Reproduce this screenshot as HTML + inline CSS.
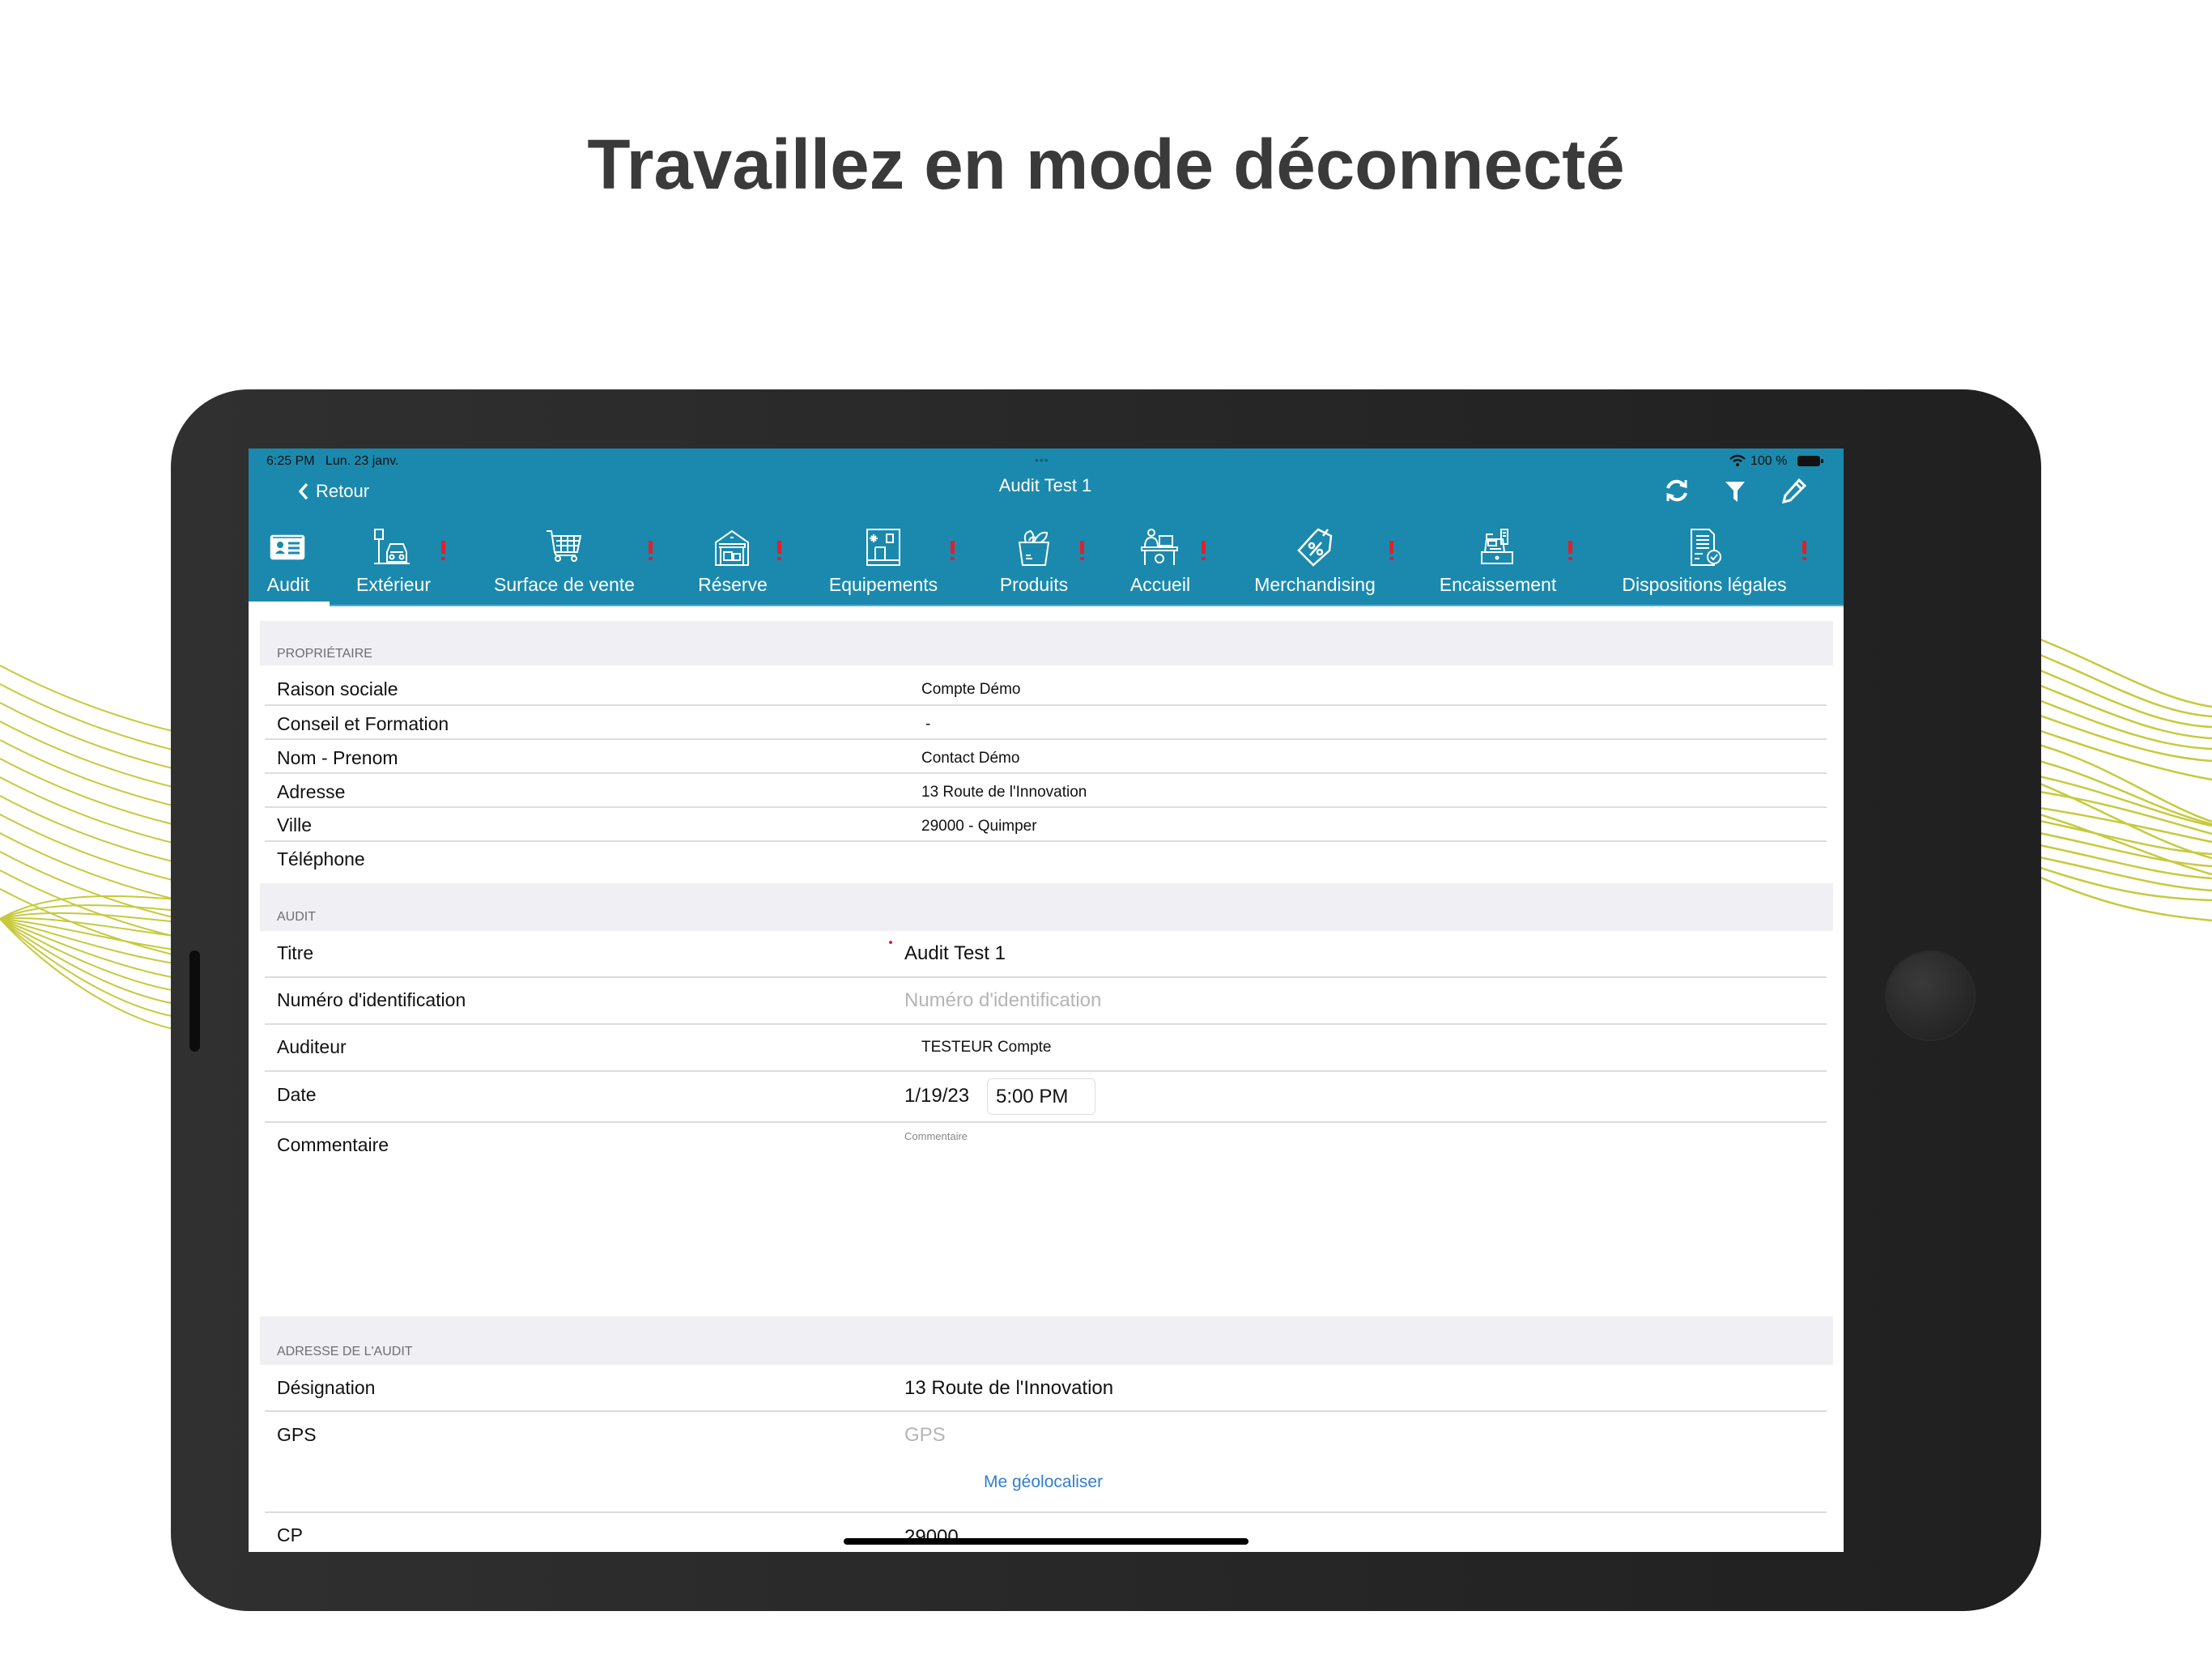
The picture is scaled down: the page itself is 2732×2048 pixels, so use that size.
<!DOCTYPE html>
<html><head><meta charset="utf-8"><style>
*{margin:0;padding:0;box-sizing:border-box}
body{width:2732px;height:2048px;background:#fff;position:relative;overflow:hidden;font-family:"Liberation Sans",sans-serif}
.t{position:absolute;white-space:nowrap;line-height:1}
.a{position:absolute}
.lab{font-size:23px;color:#111}
.val{font-size:19px;color:#111}
.sec{font-size:16px;color:#6d6d72}
.sep{position:absolute;left:327px;width:1929px;height:2px;background:#dcdcdc}
.sb{position:absolute;left:321px;width:1943px;background:#efeff4}
.tab{font-size:23px;color:#fff;transform:translateX(-50%)}
.ex{position:absolute;top:668px;width:5px;height:16px;background:#e0202a}
.ex:after{content:"";position:absolute;left:0;top:20px;width:5px;height:4px;background:#e0202a}
.ic{position:absolute;top:652px;width:48px;height:48px}
</style></head><body>

<div class="t" style="left:0;width:2732px;text-align:center;top:160px;font-size:87px;font-weight:bold;color:#3a3a3a">Travaillez en mode déconnecté</div>

<svg class="a" style="left:0;top:0" width="2732" height="2048" fill="none" stroke="#c6ca3c" stroke-width="2">
<g>
<path d="M0 822 Q110 880 230 907"/><path d="M0 845 Q110 903 230 930"/><path d="M0 868 Q110 926 230 953"/><path d="M0 891 Q110 949 230 976"/><path d="M0 914 Q110 972 230 999"/><path d="M0 937 Q110 995 230 1022"/><path d="M0 960 Q110 1018 230 1045"/><path d="M0 983 Q110 1041 230 1068"/><path d="M0 1006 Q110 1064 230 1091"/><path d="M0 1029 Q110 1087 230 1114"/><path d="M0 1052 Q110 1110 230 1137"/><path d="M0 1075 Q110 1133 230 1160"/><path d="M0 1098 Q110 1156 230 1183"/>
<path d="M0 1135 C60 1100 150 1105 230 1112"/><path d="M0 1135 C60 1110 150 1118 230 1126"/><path d="M0 1135 C60 1120 150 1132 230 1140"/><path d="M0 1135 C60 1130 150 1148 230 1158"/><path d="M0 1135 C60 1140 150 1165 230 1175"/><path d="M0 1135 C60 1150 150 1182 230 1192"/><path d="M0 1135 C60 1160 150 1198 230 1210"/><path d="M0 1135 C60 1170 150 1215 230 1226"/><path d="M0 1135 C60 1180 150 1232 230 1242"/><path d="M0 1135 C60 1190 150 1248 230 1258"/><path d="M0 1135 C60 1200 150 1262 230 1274"/>
</g>
<g stroke-width="2.5">
<path d="M2500 782 C2600 820 2660 862 2732 873"/><path d="M2500 801 C2600 840 2660 880 2732 885"/><path d="M2500 820 C2600 860 2660 895 2732 898"/><path d="M2500 839 C2600 878 2660 908 2732 912"/><path d="M2500 858 C2600 896 2660 922 2732 925"/><path d="M2500 877 C2600 912 2660 935 2732 940"/><path d="M2500 896 C2600 930 2660 950 2732 963"/><path d="M2500 915 C2600 940 2660 990 2732 1015"/><path d="M2500 935 C2600 960 2660 1000 2732 1018"/><path d="M2500 955 C2600 975 2660 1005 2732 1020"/><path d="M2500 975 C2600 990 2660 1010 2732 1030"/><path d="M2500 995 C2600 1010 2660 1025 2732 1040"/><path d="M2500 1010 C2600 1030 2660 1050 2732 1055"/><path d="M2500 1025 C2600 1045 2660 1065 2732 1070"/><path d="M2500 1040 C2600 1060 2660 1080 2732 1085"/><path d="M2500 1055 C2600 1075 2660 1095 2732 1100"/><path d="M2500 1065 C2600 1100 2660 1110 2732 1112"/><path d="M2500 1075 C2600 1120 2660 1130 2732 1137"/><path d="M2500 1000 C2600 1030 2660 1060 2732 1080"/><path d="M2500 960 C2600 1000 2660 1040 2732 1060"/>
</g>
</svg>

<div class="a" style="left:211px;top:481px;width:2310px;height:1509px;border-radius:96px;background:linear-gradient(90deg,#303030,#262626 60%,#202020)"></div>
<div class="a" style="left:234px;top:1174px;width:13px;height:125px;border-radius:7px;background:#0c0c0c"></div>
<div class="a" style="left:2330px;top:1176px;width:108px;height:108px;border-radius:50%;background:radial-gradient(circle at 40% 35%,#3a3a3a,#1d1d1d);box-shadow:0 0 0 2px #2a2a2a"></div>

<div class="a" style="left:307px;top:554px;width:1970px;height:1363px;background:#fff;overflow:hidden"></div>
<div class="a" style="left:307px;top:554px;width:1970px;height:195px;background:#1b89ad;border-bottom:2px solid #5fb0cc"></div>
<div class="t" style="left:329px;top:562px;font-size:16px;color:#111">6:25 PM&nbsp;&nbsp;&nbsp;Lun. 23 janv.</div>
<div class="t" style="left:1278px;top:561px;font-size:14px;color:#0d5e7a;letter-spacing:1px">•••</div>
<div class="t" style="left:2162px;top:562px;font-size:16px;color:#111">100 %</div>
<svg class="a" style="left:2135px;top:561px" width="22" height="16"><path d="M2 6 Q11 -2 20 6" stroke="#111" stroke-width="2.5" fill="none"/><path d="M6 9 Q11 5 16 9" stroke="#111" stroke-width="2.5" fill="none"/><circle cx="11" cy="13" r="2" fill="#111"/></svg>
<div class="a" style="left:2220px;top:563px;width:28px;height:13px;border:2px solid #111;border-radius:3px;background:#111"></div>
<div class="a" style="left:2249px;top:567px;width:3px;height:5px;background:#111"></div>

<svg class="a" style="left:368px;top:596px" width="14" height="22"><path d="M11 2 L3 11 L11 20" stroke="#fff" stroke-width="3.5" fill="none"/></svg>
<div class="t" style="left:390px;top:596px;font-size:22px;color:#fff">Retour</div>
<div class="t" style="left:1291px;top:589px;font-size:22px;color:#fff;transform:translateX(-50%)">Audit Test 1</div>
<svg class="a" style="left:2055px;top:590px" width="32" height="32" fill="none" stroke="#fff" stroke-width="4"><path d="M5 13 A11 11 0 0 1 25 10"/><path d="M27 19 A11 11 0 0 1 7 22"/><path d="M20 9 L27 11 L27 3" stroke-width="3"/><path d="M12 23 L5 21 L5 29" stroke-width="3"/></svg>
<svg class="a" style="left:2128px;top:592px" width="30" height="30"><path d="M3 3 H27 L18 14 V28 L13 24 V14 Z" fill="#fff"/></svg>
<svg class="a" style="left:2200px;top:590px" width="32" height="32"><path d="M22 3 L29 10 L11 28 L3 30 L5 22 Z" fill="none" stroke="#fff" stroke-width="3"/><path d="M18 7 L25 14" stroke="#fff" stroke-width="3"/></svg>

<svg class="ic" style="left:331px" viewBox="0 0 48 48" fill="none" stroke="#fff" stroke-width="2.5"><rect x="4" y="10" width="40" height="28" rx="2" fill="#fff"/><circle cx="15" cy="21" r="4" fill="#1b89ad" stroke="none"/><path d="M9 32 Q15 24 21 32 Z" fill="#1b89ad" stroke="none"/><path d="M25 19 H39 M25 25 H39 M25 31 H39" stroke="#1b89ad" stroke-width="3"/><path d="M6 12 H42" stroke="#1b89ad" stroke-width="1.5"/></svg>
<svg class="ic" style="left:460px" viewBox="0 0 48 48" fill="none" stroke="#fff" stroke-width="2"><rect x="3" y="2" width="10" height="12"/><path d="M8 14 V44 M2 44 H46"/><path d="M18 30 L22 20 H38 L42 30 V42 H18 Z"/><circle cx="24" cy="36" r="2.5"/><circle cx="36" cy="36" r="2.5"/><path d="M22 30 H38"/></svg>
<svg class="ic" style="left:673px" viewBox="0 0 48 48" fill="none" stroke="#fff" stroke-width="2"><path d="M2 4 H8 L12 30 H40 L44 10 H10"/><path d="M14 16 H42 M14 22 H41 M20 10 V30 M28 10 V30 M36 10 V30"/><circle cx="16" cy="38" r="3"/><circle cx="36" cy="38" r="3"/><path d="M12 30 L14 34 H38"/></svg>
<svg class="ic" style="left:880px" viewBox="0 0 48 48" fill="none" stroke="#fff" stroke-width="2"><path d="M4 18 L24 4 L44 18 V46 H4 Z"/><path d="M8 20 H40 V24 H8 M10 24 V46 M38 24 V46"/><rect x="14" y="30" width="10" height="10"/><rect x="26" y="32" width="8" height="8"/><path d="M22 12 H26"/></svg>
<svg class="ic" style="left:1067px" viewBox="0 0 48 48" fill="none" stroke="#fff" stroke-width="2"><rect x="4" y="2" width="40" height="44"/><path d="M4 40 H44"/><rect x="28" y="8" width="8" height="10"/><path d="M12 8 V18 M7 13 H17 M9 10 L15 16 M15 10 L9 16"/><path d="M14 24 H26 V40 M14 24 V40"/></svg>
<svg class="ic" style="left:1253px" viewBox="0 0 48 48" fill="none" stroke="#fff" stroke-width="2"><path d="M6 18 H42 L38 46 H10 Z"/><path d="M14 18 Q10 6 20 4 Q26 10 22 18 M24 18 Q30 4 40 6 Q40 14 32 18 M18 16 Q20 10 26 12"/><path d="M14 34 H20 M14 38 H22"/></svg>
<svg class="ic" style="left:1408px" viewBox="0 0 48 48" fill="none" stroke="#fff" stroke-width="2"><circle cx="14" cy="6" r="4"/><path d="M6 24 Q6 12 14 12 Q22 12 22 24"/><rect x="24" y="10" width="16" height="12"/><path d="M2 24 H46 V28 H2 Z M6 28 V46 M42 28 V46"/><circle cx="24" cy="38" r="5"/></svg>
<svg class="ic" style="left:1600px" viewBox="0 0 48 48" fill="none" stroke="#fff" stroke-width="2.5"><path d="M28 2 L44 10 L42 28 L22 46 L4 28 L22 8 Z"/><circle cx="20" cy="22" r="3"/><circle cx="30" cy="30" r="3"/><path d="M32 18 L18 34"/><path d="M34 10 L40 2"/></svg>
<svg class="ic" style="left:1826px" viewBox="0 0 48 48" fill="none" stroke="#fff" stroke-width="2"><rect x="4" y="30" width="38" height="14"/><path d="M8 30 L10 14 H30 L32 30"/><rect x="12" y="16" width="10" height="6"/><path d="M28 2 H36 V20 H28 Z M30 6 H34 M30 10 H34 M10 14 V8 H18"/><path d="M14 26 H28"/><circle cx="23" cy="37" r="1.5"/></svg>
<svg class="ic" style="left:2081px" viewBox="0 0 48 48" fill="none" stroke="#fff" stroke-width="2"><path d="M8 2 H30 L36 8 V46 H8 Z"/><path d="M14 10 H30 M14 15 H30 M14 20 H30 M14 25 H30 M12 32 H22 M12 38 H18"/><circle cx="36" cy="36" r="8" fill="#1b89ad"/><path d="M32 36 L35 39 L40 33"/></svg>

<div class="ex" style="left:545px"></div><div class="ex" style="left:801px"></div><div class="ex" style="left:960px"></div><div class="ex" style="left:1174px"></div><div class="ex" style="left:1334px"></div><div class="ex" style="left:1484px"></div><div class="ex" style="left:1716px"></div><div class="ex" style="left:1937px"></div><div class="ex" style="left:2226px"></div>

<div class="t tab" style="left:356px;top:711px">Audit</div>
<div class="t tab" style="left:486px;top:711px">Extérieur</div>
<div class="t tab" style="left:697px;top:711px">Surface de vente</div>
<div class="t tab" style="left:905px;top:711px">Réserve</div>
<div class="t tab" style="left:1091px;top:711px">Equipements</div>
<div class="t tab" style="left:1277px;top:711px">Produits</div>
<div class="t tab" style="left:1433px;top:711px">Accueil</div>
<div class="t tab" style="left:1624px;top:711px">Merchandising</div>
<div class="t tab" style="left:1850px;top:711px">Encaissement</div>
<div class="t tab" style="left:2105px;top:711px">Dispositions légales</div>
<div class="a" style="left:307px;top:743px;width:100px;height:8px;background:#fff"></div>

<div class="sb" style="top:767px;height:55px"></div>
<div class="t sec" style="left:342px;top:800px">PROPRIÉTAIRE</div>
<div class="t lab" style="left:342px;top:840px">Raison sociale</div>
<div class="t lab" style="left:342px;top:883px">Conseil et Formation</div>
<div class="t lab" style="left:342px;top:925px">Nom - Prenom</div>
<div class="t lab" style="left:342px;top:967px">Adresse</div>
<div class="t lab" style="left:342px;top:1008px">Ville</div>
<div class="t lab" style="left:342px;top:1050px">Téléphone</div>
<div class="t val" style="left:1138px;top:842px">Compte Démo</div>
<div class="t val" style="left:1143px;top:885px">-</div>
<div class="t val" style="left:1138px;top:927px">Contact Démo</div>
<div class="t val" style="left:1138px;top:969px">13 Route de l'Innovation</div>
<div class="t val" style="left:1138px;top:1011px">29000 - Quimper</div>
<div class="sep" style="top:870px"></div><div class="sep" style="top:912px"></div><div class="sep" style="top:954px"></div><div class="sep" style="top:996px"></div><div class="sep" style="top:1038px"></div>

<div class="sb" style="top:1091px;height:59px"></div>
<div class="t sec" style="left:342px;top:1125px">AUDIT</div>
<div class="t lab" style="left:342px;top:1166px">Titre</div>
<div class="t lab" style="left:342px;top:1224px">Numéro d'identification</div>
<div class="t lab" style="left:342px;top:1282px">Auditeur</div>
<div class="t lab" style="left:342px;top:1341px">Date</div>
<div class="t lab" style="left:342px;top:1403px">Commentaire</div>
<div class="a" style="left:1098px;top:1162px;width:4px;height:4px;border-radius:50%;background:#e0202a"></div>
<div class="t" style="left:1117px;top:1166px;font-size:24px;color:#111">Audit Test 1</div>
<div class="t" style="left:1117px;top:1224px;font-size:24px;color:#b5b5b5">Numéro d'identification</div>
<div class="t val" style="left:1138px;top:1284px">TESTEUR Compte</div>
<div class="t" style="left:1117px;top:1342px;font-size:24px;color:#111">1/19/23</div>
<div class="a" style="left:1219px;top:1332px;width:134px;height:45px;border:1px solid #dedede;border-radius:6px"></div>
<div class="t" style="left:1230px;top:1343px;font-size:24px;color:#111">5:00 PM</div>
<div class="t" style="left:1117px;top:1397px;font-size:13px;color:#888">Commentaire</div>
<div class="sep" style="top:1206px"></div><div class="sep" style="top:1264px"></div><div class="sep" style="top:1322px"></div><div class="sep" style="top:1385px"></div>

<div class="sb" style="top:1626px;height:60px"></div>
<div class="t sec" style="left:342px;top:1662px">ADRESSE DE L'AUDIT</div>
<div class="t lab" style="left:342px;top:1703px">Désignation</div>
<div class="t lab" style="left:342px;top:1761px">GPS</div>
<div class="t lab" style="left:342px;top:1885px">CP</div>
<div class="t" style="left:1117px;top:1703px;font-size:24px;color:#111">13 Route de l'Innovation</div>
<div class="t" style="left:1117px;top:1761px;font-size:24px;color:#b5b5b5">GPS</div>
<div class="t" style="left:1215px;top:1820px;font-size:21px;color:#2f7fcf">Me géolocaliser</div>
<div class="t" style="left:1117px;top:1887px;font-size:24px;color:#111">29000</div>
<div class="sep" style="top:1742px"></div><div class="sep" style="top:1867px"></div>
<div class="a" style="left:1042px;top:1900px;width:500px;height:8px;border-radius:4px;background:#000"></div>
</body></html>
